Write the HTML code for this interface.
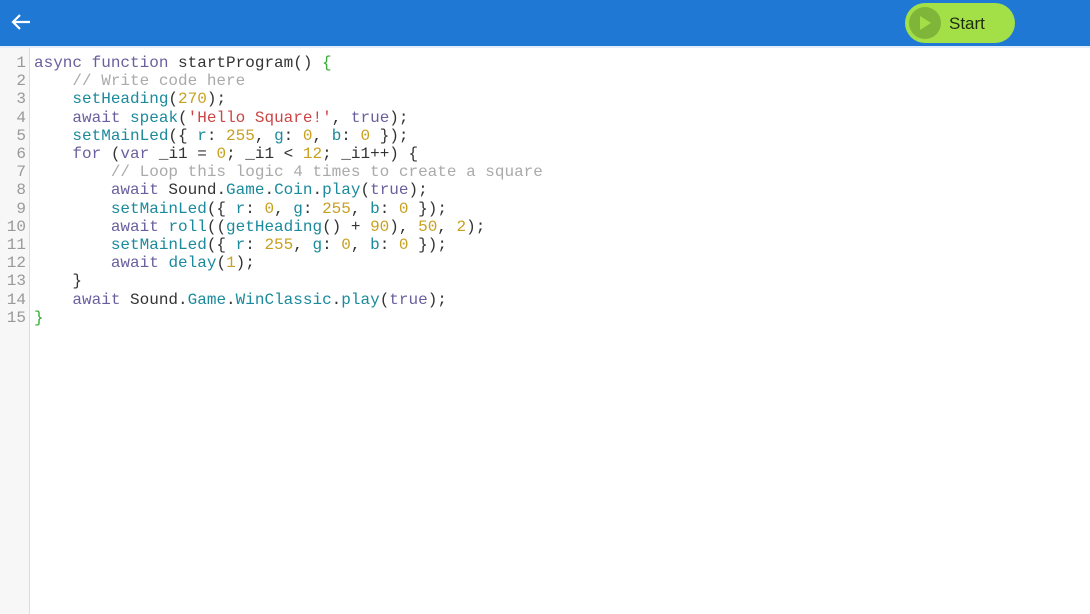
<!DOCTYPE html>
<html><head><style>
body{margin:0;width:1090px;height:614px;overflow:hidden;background:#fff;font-family:"Liberation Sans",sans-serif}
.hdr{position:absolute;left:0;top:0;width:1090px;height:46px;background:#1f78d4;border-bottom:2px solid #e4eef8}
.btn{position:absolute;left:905px;top:3px;width:110px;height:40px;border-radius:20px;background:#a3e048}
.circ{position:absolute;left:4px;top:4px;width:32px;height:32px;border-radius:50%;background:#7fb63a}
.btn span{position:absolute;left:44px;top:11px;font-size:17px;color:#1d2b10}
.gut{position:absolute;left:0;top:48px;width:29px;height:566px;background:#f7f7f7;border-right:1px solid #ddd}
pre{margin:0;position:absolute;top:54px;font-family:"Liberation Mono",monospace;font-size:16px;line-height:18.2px}
.ln{left:0;width:26px;text-align:right;color:#999}
.code{left:34px;color:#333}
.k{color:#6a5f9e}.f{color:#1a8a9c}.n{color:#c8a020}.s{color:#c44}.c{color:#aaa}.b{color:#3a3}
</style></head><body>
<div class="hdr">
<svg style="position:absolute;left:10px;top:12px" width="22" height="20" viewBox="0 0 22 20"><path d="M20 10H3M10 3L3 10L10 17" stroke="#fff" stroke-width="2.2" fill="none"/></svg>
<div class="btn"><div class="circ"><svg style="position:absolute;left:11px;top:9px" width="12" height="14"><path d="M0 0L11 7L0 14Z" fill="#a3e048"/></svg></div><span>Start</span></div>
</div>
<div class="gut"></div>
<pre class="ln">1
2
3
4
5
6
7
8
9
10
11
12
13
14
15</pre>
<pre class="code"><span class="k">async function</span> startProgram() <span class="b">{</span>
    <span class="c">// Write code here</span>
    <span class="f">setHeading</span>(<span class="n">270</span>);
    <span class="k">await</span> <span class="f">speak</span>(<span class="s">'Hello Square!'</span>, <span class="k">true</span>);
    <span class="f">setMainLed</span>({ <span class="f">r</span>: <span class="n">255</span>, <span class="f">g</span>: <span class="n">0</span>, <span class="f">b</span>: <span class="n">0</span> });
    <span class="k">for</span> (<span class="k">var</span> _i1 = <span class="n">0</span>; _i1 &lt; <span class="n">12</span>; _i1++) {
        <span class="c">// Loop this logic 4 times to create a square</span>
        <span class="k">await</span> Sound.<span class="f">Game</span>.<span class="f">Coin</span>.<span class="f">play</span>(<span class="k">true</span>);
        <span class="f">setMainLed</span>({ <span class="f">r</span>: <span class="n">0</span>, <span class="f">g</span>: <span class="n">255</span>, <span class="f">b</span>: <span class="n">0</span> });
        <span class="k">await</span> <span class="f">roll</span>((<span class="f">getHeading</span>() + <span class="n">90</span>), <span class="n">50</span>, <span class="n">2</span>);
        <span class="f">setMainLed</span>({ <span class="f">r</span>: <span class="n">255</span>, <span class="f">g</span>: <span class="n">0</span>, <span class="f">b</span>: <span class="n">0</span> });
        <span class="k">await</span> <span class="f">delay</span>(<span class="n">1</span>);
    }
    <span class="k">await</span> Sound.<span class="f">Game</span>.<span class="f">WinClassic</span>.<span class="f">play</span>(<span class="k">true</span>);
<span class="b">}</span></pre>
</body></html>
